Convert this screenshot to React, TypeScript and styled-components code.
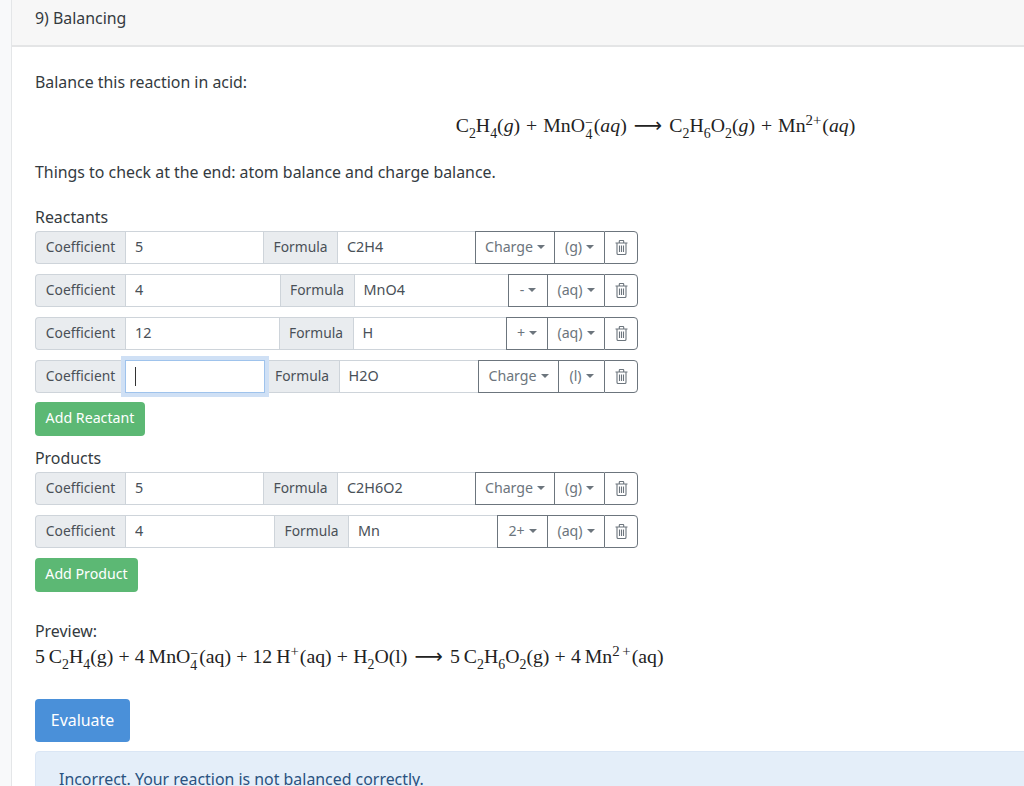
import React from "react";
import styled, { createGlobalStyle } from "styled-components";

const GlobalStyle = createGlobalStyle`
  html, body {
    margin: 0;
    height: 786px;
    overflow: hidden;
    background: #f8f9fa;
    color: #343a40;
    font-family: "Noto Sans", sans-serif;
    font-size: 15.9px;
  }
`;

const Page = styled.div`
  width: 1300px;
  height: 786px;
  padding-left: 11px;
  box-sizing: border-box;
  overflow: hidden;
`;

const Card = styled.section`
  width: 1276px;
  min-height: 900px;
  background: #fff;
  border-left: 1px solid #e4e6e8;
`;

const CardHeader = styled.header`
  height: 47px;
  padding: 8px 23px 0;
  box-sizing: border-box;
  background: #f7f7f7;
  border-bottom: 2px solid #e4e5e6;
  line-height: 20px;
`;

const CardBody = styled.div`
  padding: 24px 0 0 23px;
  width: 1241px;
`;

const Text = styled.p`
  margin: 0;
  line-height: 22px;
`;

const DisplayMath = styled.div`
  margin: 19px 0 23px;
  height: 26px;
  line-height: 26px;
  text-align: center;
  font-family: "Liberation Serif", serif;
  font-size: 19.8px;
  color: #222;
  white-space: nowrap;
`;

const SectionLabel = styled.div`
  line-height: 20px;
  margin-bottom: 4px;
`;

const ReactantLabel = styled(SectionLabel)`
  margin-top: 24px;
`;

const ProductLabel = styled(SectionLabel)`
  margin-top: 12px;
`;

const Group = styled.div`
  display: flex;
  width: 603px;
  height: 33px;
  margin-bottom: ${(p) => (p.$focused ? 9 : 10)}px;
  font-size: 13.8px;
`;

const Addon = styled.span`
  display: flex;
  align-items: center;
  justify-content: center;
  flex: none;
  width: ${(p) => p.$width}px;
  box-sizing: border-box;
  padding-bottom: 2px;
  background: #e9ecef;
  border: 1px solid #ced4da;
  border-right: none;
  color: #495057;
  &:first-child {
    border-radius: 4px 0 0 4px;
  }
`;

const Field = styled.div`
  position: relative;
  flex: 1;
  width: 0;
  display: flex;
  z-index: ${(p) => (p.$focused ? 1 : 0)};
`;

const FieldInput = styled.input`
  width: 100%;
  box-sizing: border-box;
  padding: 0 9px 2px;
  border: 1px solid ${(p) => (p.$focused ? "#9fc3ec" : "#ced4da")};
  border-right: ${(p) => (p.$focused ? "1px solid #9fc3ec" : "none")};
  box-shadow: ${(p) => (p.$focused ? "0 0 0 4px #cfe0f5" : "none")};
  outline: none;
  background: #fff;
  color: #495057;
  font: inherit;
  font-size: 14.4px;
`;

const Caret = styled.span`
  position: absolute;
  left: 10px;
  top: 7px;
  width: 1px;
  height: 19px;
  background: #333;
`;

const DropButton = styled.button`
  flex: none;
  display: flex;
  align-items: center;
  justify-content: center;
  gap: 4px;
  width: ${(p) => p.$width}px;
  padding: 0 0 2px;
  box-sizing: border-box;
  background: #fff;
  border: 1px solid #6c757d;
  border-right: none;
  color: #6c757d;
  font: inherit;
  font-size: 14.2px;
  &::after {
    content: "";
    border-top: 4.5px solid #6c757d;
    border-left: 4.5px solid transparent;
    border-right: 4.5px solid transparent;
  }
`;

const TrashButton = styled.button`
  flex: none;
  width: 34px;
  padding: 0;
  display: flex;
  align-items: center;
  justify-content: center;
  background: #fff;
  border: 1px solid #6c757d;
  border-radius: 0 4px 4px 0;
  color: #6c757d;
`;

const AddButton = styled.button`
  display: block;
  height: 34px;
  width: ${(p) => p.$width}px;
  padding: 0 0 3px;
  border: none;
  border-radius: 4px;
  background: #5cb874;
  color: #fff;
  font: inherit;
  font-size: 14.2px;
`;

const PreviewLabel = styled.div`
  margin-top: 29px;
  line-height: 20px;
`;

const Op = styled.span`
  margin: 0 0.3em;
`;

const PreviewMath = styled.div`
  margin-top: 2px;
  height: 26px;
  line-height: 26px;
  font-family: "Liberation Serif", serif;
  font-size: 19.8px;
  word-spacing: -1px;
  color: #222;
  white-space: nowrap;

  ${Op} {
    margin: 0 0.26em;
  }
`;

const EvaluateButton = styled.button`
  display: block;
  margin-top: 30px;
  width: 95px;
  height: 43px;
  padding: 0 0 2px;
  border: none;
  border-radius: 4px;
  background: #4a90d9;
  color: #fff;
  font: inherit;
`;

const Alert = styled.div`
  margin-top: 9px;
  padding: 17px 23px;
  width: 1241px;
  box-sizing: border-box;
  background: #e4eef9;
  border: 1px solid #dae6f5;
  border-radius: 4px;
  color: #2a5280;
  line-height: 20px;
`;

const Sub = styled.sub`
  font-size: 0.7em;
  line-height: 0;
  vertical-align: -0.4em;
`;

const Sup = styled.sup`
  font-size: 0.75em;
  line-height: 0;
  vertical-align: 0.5em;
  margin-right: 1px;
`;

const Stack = styled.span`
  display: inline-flex;
  flex-direction: column;
  vertical-align: 0.35em;
  font-size: 0.7em;
  line-height: 0.85em;
  margin-right: 1px;
`;

const Arrow = styled.span`
  font-family: "DejaVu Sans", sans-serif;
  margin: 0 0.36em;
`;

const Var = styled.span`
  font-style: italic;
`;

const TrashIcon = () => (
  <svg width="13" height="15" viewBox="0 0 13 15" fill="none" stroke="currentColor" strokeWidth="1.1">
    <path d="M.5 3h12M4.3 3V1.2q0-.7.7-.7h3q.7 0 .7.7V3" />
    <path d="M2 3v10.3q0 1.2 1.2 1.2h6.6q1.2 0 1.2-1.2V3" />
    <path d="M4.5 5.5v6.5M6.5 5.5v6.5M8.5 5.5v6.5" />
  </svg>
);

const IonMinus = () => (
  <Stack>
    <span>−</span>
    <span>4</span>
  </Stack>
);

type RowProps = {
  coefficient: string;
  formula: string;
  charge: string;
  chargeWidth: number;
  state: string;
  stateWidth: number;
  focused?: boolean;
};

function Row({ coefficient, formula, charge, chargeWidth, state, stateWidth, focused }: RowProps) {
  return (
    <Group $focused={focused}>
      <Addon $width={90}>Coefficient</Addon>
      <Field $focused={focused}>
        <FieldInput $focused={focused} defaultValue={coefficient} />
        {focused && <Caret />}
      </Field>
      <Addon $width={74}>Formula</Addon>
      <Field>
        <FieldInput defaultValue={formula} />
      </Field>
      <DropButton $width={chargeWidth}>{charge}</DropButton>
      <DropButton $width={stateWidth}>{state}</DropButton>
      <TrashButton aria-label="Delete">
        <TrashIcon />
      </TrashButton>
    </Group>
  );
}

export default function App() {
  return (
    <Page>
      <GlobalStyle />
      <Card>
        <CardHeader>9) Balancing</CardHeader>
        <CardBody>
          <Text>Balance this reaction in acid:</Text>
          <DisplayMath>
            C<Sub>2</Sub>H<Sub>4</Sub>(<Var>g</Var>)<Op>+</Op>MnO
            <IonMinus />
            (<Var>aq</Var>)<Arrow>⟶</Arrow>C<Sub>2</Sub>H<Sub>6</Sub>O<Sub>2</Sub>(<Var>g</Var>)<Op>+</Op>Mn<Sup>2+</Sup>(<Var>aq</Var>)
          </DisplayMath>
          <Text>Things to check at the end: atom balance and charge balance.</Text>

          <ReactantLabel>Reactants</ReactantLabel>
          <Row coefficient="5" formula="C2H4" charge="Charge" chargeWidth={79} state="(g)" stateWidth={50} />
          <Row coefficient="4" formula="MnO4" charge="-" chargeWidth={39} state="(aq)" stateWidth={57} />
          <Row coefficient="12" formula="H" charge="+" chargeWidth={41} state="(aq)" stateWidth={57} />
          <Row coefficient="" formula="H2O" charge="Charge" chargeWidth={80} state="(l)" stateWidth={46} focused />
          <AddButton $width={110}>Add Reactant</AddButton>

          <ProductLabel>Products</ProductLabel>
          <Row coefficient="5" formula="C2H6O2" charge="Charge" chargeWidth={79} state="(g)" stateWidth={50} />
          <Row coefficient="4" formula="Mn" charge="2+" chargeWidth={50} state="(aq)" stateWidth={57} />
          <AddButton $width={103}>Add Product</AddButton>

          <PreviewLabel>Preview:</PreviewLabel>
          <PreviewMath>
            5 C<Sub>2</Sub>H<Sub>4</Sub>(g)<Op>+</Op>4 MnO
            <IonMinus />
            (aq)<Op>+</Op>12 H<Sup>+</Sup>(aq)<Op>+</Op>H<Sub>2</Sub>O(l)<Arrow>⟶</Arrow>5 C<Sub>2</Sub>H<Sub>6</Sub>O<Sub>2</Sub>(g)<Op>+</Op>4 Mn<Sup>2 +</Sup>(aq)
          </PreviewMath>
          <EvaluateButton>Evaluate</EvaluateButton>
          <Alert>Incorrect. Your reaction is not balanced correctly.</Alert>
        </CardBody>
      </Card>
    </Page>
  );
}
